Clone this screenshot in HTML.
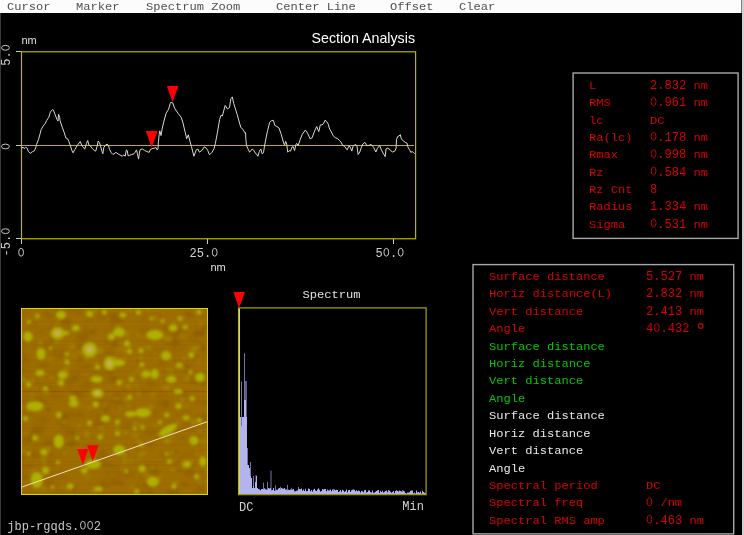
<!DOCTYPE html>
<html><head><meta charset="utf-8"><style>
html,body{margin:0;padding:0;background:#000;}
body{width:744px;height:535px;overflow:hidden;position:relative;font-family:"Liberation Mono",monospace;}
svg{position:absolute;left:0;top:0;will-change:transform;}
</style></head><body>
<svg width="744" height="535" viewBox="0 0 744 535">
<defs>
<filter id="bl" x="-20%" y="-20%" width="140%" height="140%"><feGaussianBlur stdDeviation="1.7"/></filter>
<filter id="bl2" x="-50%" y="-50%" width="200%" height="200%"><feGaussianBlur stdDeviation="1.2"/></filter>
<filter id="bl3" x="-50%" y="-50%" width="200%" height="200%"><feGaussianBlur stdDeviation="1.8"/></filter>
<filter id="bl4" x="-5%" y="-200%" width="110%" height="500%"><feGaussianBlur stdDeviation="0.5"/></filter>
<clipPath id="afm"><rect x="21" y="308" width="187" height="187"/></clipPath>
</defs>
<rect x="0" y="0" width="744" height="535" fill="#000"/>
<rect x="0" y="0" width="741" height="13" fill="#fcfcfc"/>
<rect x="741" y="0" width="1" height="13" fill="#808080"/>
<rect x="742" y="0" width="2" height="535" fill="#d0d0d0"/>
<rect x="0" y="13" width="1" height="522" fill="#383838"/>

<!-- chart -->
<rect x="21.5" y="51.8" width="394.1" height="186.95" fill="none" stroke="#bcb400" stroke-width="1.2"/>
<line x1="22" y1="145.5" x2="414" y2="145.5" stroke="#bcb400" stroke-width="1"/>
<line x1="16" y1="51.5" x2="21" y2="51.5" stroke="#c8c8c8" stroke-width="1"/>
<line x1="16" y1="145.5" x2="21" y2="145.5" stroke="#c8c8c8" stroke-width="1"/>
<line x1="16" y1="238.5" x2="21" y2="238.5" stroke="#c8c8c8" stroke-width="1"/>
<line x1="21.5" y1="239" x2="21.5" y2="244" stroke="#c8c8c8" stroke-width="1"/>
<line x1="207.5" y1="239" x2="207.5" y2="244" stroke="#c8c8c8" stroke-width="1"/>
<line x1="393.5" y1="239" x2="393.5" y2="244" stroke="#c8c8c8" stroke-width="1"/>
<polyline points="21.5,148.2 23.1,147.2 24.1,148.7 25.7,147.2 27.2,148.2 28.2,151.3 30.3,153.3 32.3,151.8 34.4,150.8 35.9,147.2 36.5,144.6 38.5,139.4 40.1,133.8 41.1,129.7 43.1,126.1 45.2,123.5 46.7,120.4 48.8,117.3 50.3,112.2 52.4,109.6 53.4,110.1 55.0,114.3 57.0,119.4 58.0,121.0 58.6,114.3 59.6,117.3 60.1,120.9 62.2,127.1 64.3,132.8 65.8,137.9 67.3,138.4 68.9,141.5 70.4,145.6 72.0,150.8 73.0,152.8 75.1,149.2 77.1,145.6 80.2,141.5 82.2,146.1 83.3,147.2 84.8,149.2 86.4,143.6 87.7,140.5 88.9,145.1 90.5,146.1 92.5,148.7 94.6,150.8 95.7,151.1 97.0,146.9 98.2,141.0 99.5,142.7 100.8,146.9 102.0,151.6 102.9,153.7 103.7,147.8 105.0,145.7 107.1,144.0 108.4,145.3 109.6,149.5 111.3,152.8 113.0,154.5 115.9,152.4 118.4,154.1 120.9,155.4 122.2,156.2 123.9,154.9 125.2,156.2 126.4,149.9 127.3,150.7 128.1,155.8 129.4,155.4 131.9,154.5 134.0,153.7 135.3,152.0 136.5,149.9 137.4,153.7 138.6,159.1 139.5,152.0 140.3,149.5 142.4,149.0 144.5,150.3 147.0,151.6 149.1,152.4 150.4,149.5 152.1,148.6 154.2,148.2 155.9,147.4 157.1,149.9 158.0,148.6 158.4,141.9 159.2,134.3 159.8,130.8 161.0,135.6 162.1,129.2 163.7,122.1 166.1,113.3 168.5,109.4 170.1,103.8 170.9,102.2 172.8,103.0 174.8,108.6 178.0,113.3 181.2,117.3 182.8,122.1 185.2,132.4 186.7,138.7 188.3,134.8 189.9,141.1 191.5,146.7 193.9,156.2 196.3,149.8 197.9,149.0 199.4,152.2 200.0,151.7 202.1,150.3 204.2,146.8 206.3,148.2 207.7,150.3 209.5,154.8 211.9,152.4 214.0,148.9 215.4,143.3 217.5,132.1 219.6,119.5 221.0,115.2 222.4,115.9 225.2,105.4 227.3,108.9 229.5,107.5 230.9,98.4 232.3,97.0 233.7,103.3 237.2,114.5 240.7,127.2 242.8,129.3 244.9,132.8 245.5,132.6 246.0,140.9 246.5,145.5 248.1,149.1 249.6,152.2 252.2,149.1 253.7,150.1 255.3,153.2 256.3,153.7 257.9,156.3 259.4,151.2 260.9,149.1 262.0,153.7 263.5,152.7 264.5,146.0 266.1,137.8 267.6,130.6 269.7,122.3 271.2,120.8 273.3,120.3 274.8,125.4 276.9,126.5 279.0,128.0 281.0,133.7 283.6,142.9 284.6,145.0 285.6,141.4 286.7,144.0 287.7,152.2 289.2,150.6 290.5,151.2 292.1,147.0 293.1,146.5 294.6,150.6 295.7,145.0 296.7,143.4 298.2,145.5 300.3,139.3 302.3,134.2 305.4,130.1 307.5,133.1 310.1,138.8 312.1,137.8 314.2,132.1 316.7,126.5 318.8,131.6 320.3,124.9 321.9,124.9 323.4,123.9 325.0,120.3 326.5,121.3 328.1,123.9 329.6,129.0 331.2,131.6 333.2,135.7 335.3,137.8 337.3,138.3 339.2,140.2 340.9,141.9 342.6,145.3 344.7,146.5 347.2,149.9 348.9,146.1 350.2,146.9 351.8,151.1 353.1,146.1 355.6,144.4 356.9,145.7 358.1,154.5 359.8,152.0 361.5,146.9 362.8,144.0 364.9,142.3 367.0,145.7 369.1,145.3 371.2,144.4 373.7,147.4 375.8,152.0 377.5,148.2 379.7,145.7 381.4,149.9 383.1,153.2 385.2,156.6 386.0,149.0 387.3,148.2 389.4,149.0 390.6,150.7 392.7,152.0 394.8,151.1 396.1,148.2 396.5,139.4 397.8,136.4 399.0,136.0 400.3,134.7 401.1,138.1 402.4,140.2 404.1,141.5 405.8,142.7 407.0,143.1 407.9,146.9 409.6,149.9 410.8,152.4 412.1,151.6 413.4,152.4 414.6,153.7" fill="none" stroke="#d8d8d8" stroke-width="1" stroke-linejoin="round"/>
<polygon points="145.8,130.9 157.6,130.9 151.7,147.4" fill="#ff0000"/>
<polygon points="166.9,86 178.5,86 172.5,102.2" fill="#ff0000"/>

<!-- stats boxes -->
<rect x="573.1" y="73.0" width="165" height="165.4" fill="none" stroke="#a8a8a8" stroke-width="1.4"/>
<rect x="473.0" y="264.6" width="260.7" height="269.3" fill="none" stroke="#a8a8a8" stroke-width="1.4"/>

<!-- AFM image -->
<g clip-path="url(#afm)">
<rect x="21" y="308" width="187" height="187" fill="#9e6e00"/>
<g fill="#8a5800" filter="url(#bl3)"><ellipse cx="81.6" cy="336.2" rx="5.3" ry="1.7" opacity="0.31"/><ellipse cx="89.4" cy="318.8" rx="4.5" ry="1.6" opacity="0.28"/><ellipse cx="34.1" cy="325.0" rx="4.1" ry="3.6" opacity="0.19"/><ellipse cx="62.7" cy="425.3" rx="6.7" ry="2.9" opacity="0.27"/><ellipse cx="203.6" cy="316.7" rx="6.3" ry="2.2" opacity="0.19"/><ellipse cx="43.0" cy="365.7" rx="6.1" ry="2.0" opacity="0.32"/><ellipse cx="140.5" cy="377.6" rx="4.7" ry="1.7" opacity="0.17"/><ellipse cx="59.5" cy="435.2" rx="4.1" ry="2.3" opacity="0.33"/><ellipse cx="105.7" cy="364.1" rx="6.0" ry="3.2" opacity="0.22"/><ellipse cx="128.4" cy="406.2" rx="6.4" ry="3.3" opacity="0.24"/><ellipse cx="204.3" cy="330.1" rx="4.1" ry="3.4" opacity="0.20"/><ellipse cx="112.4" cy="315.3" rx="5.3" ry="3.4" opacity="0.32"/><ellipse cx="184.7" cy="366.7" rx="5.5" ry="3.0" opacity="0.32"/><ellipse cx="106.3" cy="465.1" rx="6.7" ry="2.7" opacity="0.35"/><ellipse cx="32.3" cy="439.2" rx="5.2" ry="4.0" opacity="0.40"/><ellipse cx="74.2" cy="380.1" rx="5.3" ry="1.6" opacity="0.29"/><ellipse cx="52.4" cy="329.9" rx="2.3" ry="3.4" opacity="0.19"/><ellipse cx="67.3" cy="381.1" rx="6.4" ry="1.7" opacity="0.28"/><ellipse cx="123.7" cy="473.2" rx="6.1" ry="3.7" opacity="0.23"/><ellipse cx="98.7" cy="375.1" rx="6.4" ry="3.9" opacity="0.20"/><ellipse cx="54.0" cy="351.4" rx="3.2" ry="2.7" opacity="0.33"/><ellipse cx="70.1" cy="308.8" rx="4.1" ry="2.4" opacity="0.32"/><ellipse cx="199.2" cy="437.1" rx="4.6" ry="3.0" opacity="0.35"/><ellipse cx="31.1" cy="476.2" rx="5.9" ry="3.7" opacity="0.39"/><ellipse cx="94.4" cy="382.6" rx="2.5" ry="3.1" opacity="0.17"/><ellipse cx="33.6" cy="347.0" rx="2.8" ry="2.4" opacity="0.17"/><ellipse cx="21.0" cy="336.3" rx="2.5" ry="2.4" opacity="0.16"/><ellipse cx="184.5" cy="422.8" rx="2.7" ry="2.1" opacity="0.25"/><ellipse cx="89.1" cy="331.0" rx="6.2" ry="4.0" opacity="0.29"/><ellipse cx="111.5" cy="324.1" rx="2.5" ry="2.4" opacity="0.23"/><ellipse cx="176.0" cy="338.2" rx="2.1" ry="3.9" opacity="0.31"/><ellipse cx="48.4" cy="409.6" rx="2.1" ry="2.8" opacity="0.44"/><ellipse cx="182.4" cy="438.2" rx="3.3" ry="2.4" opacity="0.20"/><ellipse cx="165.4" cy="407.6" rx="5.9" ry="2.3" opacity="0.22"/><ellipse cx="172.8" cy="492.2" rx="6.3" ry="3.5" opacity="0.40"/><ellipse cx="159.4" cy="350.4" rx="4.6" ry="2.4" opacity="0.16"/><ellipse cx="26.2" cy="360.3" rx="3.3" ry="3.2" opacity="0.44"/><ellipse cx="104.6" cy="483.2" rx="6.9" ry="3.9" opacity="0.26"/><ellipse cx="62.2" cy="350.4" rx="3.0" ry="2.0" opacity="0.34"/><ellipse cx="189.4" cy="465.2" rx="4.4" ry="3.1" opacity="0.39"/><ellipse cx="36.9" cy="431.5" rx="6.5" ry="3.5" opacity="0.38"/><ellipse cx="110.4" cy="341.4" rx="5.9" ry="2.3" opacity="0.39"/><ellipse cx="202.7" cy="382.0" rx="4.0" ry="3.9" opacity="0.37"/><ellipse cx="52.8" cy="331.8" rx="2.8" ry="3.8" opacity="0.39"/><ellipse cx="48.3" cy="462.6" rx="6.9" ry="3.1" opacity="0.26"/><ellipse cx="123.6" cy="332.5" rx="2.1" ry="3.9" opacity="0.34"/><ellipse cx="119.5" cy="482.6" rx="4.2" ry="3.7" opacity="0.40"/><ellipse cx="60.5" cy="355.1" rx="3.5" ry="2.1" opacity="0.33"/><ellipse cx="69.5" cy="386.4" rx="2.7" ry="3.8" opacity="0.26"/><ellipse cx="106.7" cy="417.1" rx="6.5" ry="2.6" opacity="0.43"/><ellipse cx="114.8" cy="407.5" rx="4.6" ry="1.5" opacity="0.28"/><ellipse cx="55.2" cy="308.7" rx="6.0" ry="1.9" opacity="0.29"/><ellipse cx="156.6" cy="412.1" rx="3.6" ry="2.8" opacity="0.32"/><ellipse cx="167.7" cy="327.8" rx="4.8" ry="2.1" opacity="0.23"/><ellipse cx="165.4" cy="402.9" rx="4.8" ry="3.4" opacity="0.42"/><ellipse cx="103.9" cy="422.5" rx="4.5" ry="2.8" opacity="0.36"/><ellipse cx="105.6" cy="407.7" rx="4.4" ry="3.9" opacity="0.36"/><ellipse cx="184.9" cy="484.2" rx="3.3" ry="2.9" opacity="0.43"/><ellipse cx="178.1" cy="333.6" rx="2.6" ry="2.6" opacity="0.17"/><ellipse cx="66.0" cy="321.7" rx="5.3" ry="3.5" opacity="0.42"/><ellipse cx="49.9" cy="441.9" rx="5.3" ry="1.9" opacity="0.41"/><ellipse cx="201.9" cy="349.1" rx="6.8" ry="2.5" opacity="0.30"/><ellipse cx="206.1" cy="463.7" rx="2.8" ry="2.6" opacity="0.30"/><ellipse cx="84.4" cy="344.6" rx="3.6" ry="3.3" opacity="0.16"/><ellipse cx="124.6" cy="390.4" rx="2.1" ry="2.3" opacity="0.34"/><ellipse cx="116.8" cy="320.0" rx="6.9" ry="3.5" opacity="0.44"/><ellipse cx="40.6" cy="357.7" rx="2.2" ry="3.4" opacity="0.23"/><ellipse cx="45.2" cy="387.0" rx="6.6" ry="3.5" opacity="0.23"/><ellipse cx="48.9" cy="479.9" rx="4.9" ry="3.3" opacity="0.18"/><ellipse cx="31.8" cy="436.7" rx="4.1" ry="1.7" opacity="0.43"/><ellipse cx="139.6" cy="457.9" rx="2.4" ry="3.6" opacity="0.17"/><ellipse cx="182.3" cy="392.9" rx="3.7" ry="2.9" opacity="0.43"/><ellipse cx="71.1" cy="332.2" rx="4.6" ry="2.1" opacity="0.18"/><ellipse cx="51.2" cy="317.4" rx="3.0" ry="2.3" opacity="0.24"/><ellipse cx="163.0" cy="362.2" rx="4.5" ry="1.9" opacity="0.25"/><ellipse cx="24.4" cy="354.8" rx="2.1" ry="3.3" opacity="0.32"/><ellipse cx="56.4" cy="396.8" rx="6.7" ry="1.8" opacity="0.40"/><ellipse cx="101.8" cy="400.6" rx="6.2" ry="2.5" opacity="0.30"/><ellipse cx="149.6" cy="491.7" rx="3.7" ry="3.6" opacity="0.36"/><ellipse cx="139.9" cy="383.7" rx="3.7" ry="1.6" opacity="0.19"/><ellipse cx="34.2" cy="446.5" rx="3.3" ry="1.9" opacity="0.18"/><ellipse cx="178.3" cy="470.8" rx="5.4" ry="2.2" opacity="0.22"/><ellipse cx="75.8" cy="393.9" rx="2.8" ry="2.6" opacity="0.23"/><ellipse cx="200.9" cy="489.9" rx="4.7" ry="2.1" opacity="0.44"/><ellipse cx="78.9" cy="374.7" rx="2.0" ry="2.5" opacity="0.29"/><ellipse cx="115.0" cy="345.6" rx="4.5" ry="1.5" opacity="0.23"/><ellipse cx="37.8" cy="382.7" rx="2.2" ry="1.6" opacity="0.24"/><ellipse cx="64.5" cy="417.5" rx="4.6" ry="3.4" opacity="0.35"/><ellipse cx="154.9" cy="472.4" rx="3.9" ry="2.3" opacity="0.45"/><ellipse cx="48.9" cy="443.4" rx="5.2" ry="1.6" opacity="0.40"/><ellipse cx="187.8" cy="425.3" rx="5.7" ry="3.5" opacity="0.19"/><ellipse cx="118.9" cy="402.3" rx="6.2" ry="3.5" opacity="0.40"/><ellipse cx="130.2" cy="475.0" rx="5.4" ry="3.2" opacity="0.22"/><ellipse cx="26.8" cy="332.9" rx="3.8" ry="1.8" opacity="0.40"/><ellipse cx="125.4" cy="425.4" rx="5.1" ry="3.2" opacity="0.30"/><ellipse cx="21.6" cy="457.2" rx="5.7" ry="2.8" opacity="0.31"/><ellipse cx="144.3" cy="320.4" rx="5.7" ry="2.1" opacity="0.17"/><ellipse cx="70.7" cy="444.4" rx="3.0" ry="3.3" opacity="0.44"/><ellipse cx="113.4" cy="379.5" rx="4.4" ry="3.2" opacity="0.38"/><ellipse cx="136.4" cy="428.2" rx="2.4" ry="1.9" opacity="0.23"/><ellipse cx="160.0" cy="364.9" rx="4.8" ry="1.5" opacity="0.17"/><ellipse cx="71.3" cy="433.7" rx="5.5" ry="3.2" opacity="0.24"/><ellipse cx="117.6" cy="394.9" rx="4.3" ry="1.8" opacity="0.42"/><ellipse cx="58.3" cy="490.9" rx="6.7" ry="1.5" opacity="0.29"/><ellipse cx="174.3" cy="489.0" rx="4.2" ry="2.2" opacity="0.21"/><ellipse cx="197.8" cy="347.4" rx="4.9" ry="1.9" opacity="0.31"/><ellipse cx="199.2" cy="332.8" rx="6.1" ry="2.8" opacity="0.42"/><ellipse cx="152.5" cy="351.3" rx="6.5" ry="2.7" opacity="0.16"/><ellipse cx="21.7" cy="399.9" rx="4.3" ry="2.3" opacity="0.19"/><ellipse cx="85.3" cy="367.1" rx="6.2" ry="1.5" opacity="0.38"/><ellipse cx="177.9" cy="330.4" rx="6.6" ry="3.3" opacity="0.42"/><ellipse cx="75.2" cy="377.6" rx="4.0" ry="4.0" opacity="0.33"/><ellipse cx="88.5" cy="388.0" rx="3.4" ry="1.6" opacity="0.18"/><ellipse cx="177.1" cy="361.4" rx="6.7" ry="2.1" opacity="0.23"/><ellipse cx="116.6" cy="343.5" rx="3.9" ry="3.9" opacity="0.42"/><ellipse cx="172.8" cy="426.0" rx="6.6" ry="3.9" opacity="0.31"/><ellipse cx="155.6" cy="317.3" rx="5.7" ry="2.6" opacity="0.38"/><ellipse cx="141.5" cy="361.5" rx="2.2" ry="3.8" opacity="0.19"/><ellipse cx="109.3" cy="372.3" rx="3.5" ry="3.3" opacity="0.44"/><ellipse cx="69.7" cy="430.7" rx="3.5" ry="2.9" opacity="0.27"/><ellipse cx="52.3" cy="338.2" rx="3.0" ry="3.8" opacity="0.30"/><ellipse cx="62.1" cy="477.5" rx="7.0" ry="2.6" opacity="0.19"/><ellipse cx="57.0" cy="325.0" rx="3.7" ry="1.7" opacity="0.22"/><ellipse cx="69.3" cy="414.5" rx="6.4" ry="3.4" opacity="0.27"/><ellipse cx="98.4" cy="406.0" rx="3.9" ry="2.3" opacity="0.17"/><ellipse cx="72.9" cy="489.0" rx="2.6" ry="2.8" opacity="0.34"/><ellipse cx="182.4" cy="348.4" rx="3.4" ry="2.1" opacity="0.27"/><ellipse cx="104.4" cy="486.4" rx="6.2" ry="3.7" opacity="0.16"/><ellipse cx="27.0" cy="440.7" rx="6.5" ry="2.7" opacity="0.33"/><ellipse cx="21.0" cy="381.2" rx="6.6" ry="3.6" opacity="0.41"/><ellipse cx="202.8" cy="354.5" rx="2.5" ry="1.9" opacity="0.31"/><ellipse cx="148.5" cy="484.1" rx="5.6" ry="3.1" opacity="0.38"/><ellipse cx="106.5" cy="411.1" rx="2.2" ry="3.5" opacity="0.22"/><ellipse cx="193.0" cy="428.7" rx="3.5" ry="1.8" opacity="0.23"/><ellipse cx="140.0" cy="438.6" rx="2.6" ry="1.7" opacity="0.31"/><ellipse cx="130.0" cy="380.6" rx="3.1" ry="3.0" opacity="0.15"/><ellipse cx="77.4" cy="394.1" rx="6.8" ry="3.1" opacity="0.42"/><ellipse cx="109.9" cy="351.9" rx="3.2" ry="3.9" opacity="0.36"/><ellipse cx="78.5" cy="312.1" rx="4.5" ry="3.2" opacity="0.28"/><ellipse cx="69.1" cy="432.8" rx="6.6" ry="2.1" opacity="0.16"/><ellipse cx="84.2" cy="386.6" rx="5.4" ry="2.0" opacity="0.39"/><ellipse cx="159.2" cy="402.4" rx="3.0" ry="3.9" opacity="0.24"/><ellipse cx="174.3" cy="351.2" rx="3.1" ry="3.4" opacity="0.24"/><ellipse cx="199.0" cy="400.7" rx="2.9" ry="2.1" opacity="0.28"/><ellipse cx="145.4" cy="485.4" rx="2.7" ry="2.5" opacity="0.21"/><ellipse cx="203.2" cy="334.5" rx="2.3" ry="1.7" opacity="0.27"/><ellipse cx="189.0" cy="473.2" rx="5.7" ry="4.0" opacity="0.43"/><ellipse cx="82.6" cy="342.7" rx="6.7" ry="3.4" opacity="0.16"/><ellipse cx="145.2" cy="378.8" rx="3.9" ry="2.3" opacity="0.20"/><ellipse cx="21.5" cy="360.3" rx="3.8" ry="3.9" opacity="0.19"/><ellipse cx="201.3" cy="346.8" rx="3.8" ry="3.6" opacity="0.40"/><ellipse cx="101.9" cy="317.2" rx="4.4" ry="2.4" opacity="0.43"/><ellipse cx="57.1" cy="376.1" rx="6.5" ry="1.6" opacity="0.27"/><ellipse cx="172.8" cy="451.4" rx="2.2" ry="1.6" opacity="0.17"/><ellipse cx="193.1" cy="356.1" rx="5.7" ry="3.7" opacity="0.25"/><ellipse cx="71.9" cy="487.1" rx="5.1" ry="2.2" opacity="0.36"/><ellipse cx="80.2" cy="359.5" rx="2.0" ry="3.4" opacity="0.42"/><ellipse cx="139.6" cy="484.4" rx="2.1" ry="2.1" opacity="0.29"/><ellipse cx="199.9" cy="486.4" rx="3.9" ry="2.1" opacity="0.28"/><ellipse cx="113.3" cy="481.6" rx="2.9" ry="3.5" opacity="0.37"/><ellipse cx="174.9" cy="452.5" rx="5.0" ry="2.3" opacity="0.25"/><ellipse cx="88.7" cy="454.3" rx="2.4" ry="2.0" opacity="0.38"/><ellipse cx="67.2" cy="320.1" rx="2.2" ry="2.9" opacity="0.25"/><ellipse cx="204.3" cy="473.2" rx="6.9" ry="2.2" opacity="0.18"/><ellipse cx="39.0" cy="401.2" rx="5.5" ry="2.6" opacity="0.22"/><ellipse cx="98.9" cy="424.0" rx="5.4" ry="3.4" opacity="0.40"/><ellipse cx="145.2" cy="330.7" rx="6.2" ry="2.2" opacity="0.32"/><ellipse cx="90.7" cy="446.0" rx="3.0" ry="2.1" opacity="0.22"/><ellipse cx="49.7" cy="473.3" rx="4.9" ry="2.3" opacity="0.27"/><ellipse cx="206.6" cy="402.9" rx="3.2" ry="3.5" opacity="0.35"/><ellipse cx="206.3" cy="327.1" rx="4.4" ry="3.5" opacity="0.40"/><ellipse cx="192.0" cy="315.5" rx="3.5" ry="1.8" opacity="0.21"/><ellipse cx="202.9" cy="417.1" rx="6.7" ry="2.4" opacity="0.41"/><ellipse cx="105.0" cy="356.6" rx="5.9" ry="3.9" opacity="0.18"/><ellipse cx="132.5" cy="423.9" rx="3.1" ry="2.4" opacity="0.19"/><ellipse cx="59.1" cy="355.7" rx="5.0" ry="3.1" opacity="0.21"/><ellipse cx="23.1" cy="369.2" rx="5.4" ry="2.0" opacity="0.24"/><ellipse cx="59.0" cy="456.7" rx="4.7" ry="1.7" opacity="0.18"/><ellipse cx="94.9" cy="410.9" rx="5.2" ry="1.7" opacity="0.20"/><ellipse cx="151.0" cy="384.6" rx="3.4" ry="2.3" opacity="0.44"/><ellipse cx="79.4" cy="413.9" rx="3.8" ry="2.5" opacity="0.41"/><ellipse cx="207.4" cy="376.0" rx="3.0" ry="3.3" opacity="0.21"/><ellipse cx="22.1" cy="476.6" rx="4.1" ry="3.6" opacity="0.27"/><ellipse cx="186.1" cy="394.2" rx="2.8" ry="1.5" opacity="0.32"/><ellipse cx="140.8" cy="478.1" rx="2.4" ry="3.1" opacity="0.26"/><ellipse cx="115.3" cy="335.3" rx="3.4" ry="2.8" opacity="0.43"/><ellipse cx="41.3" cy="399.7" rx="6.0" ry="3.9" opacity="0.21"/><ellipse cx="44.7" cy="484.4" rx="6.9" ry="2.7" opacity="0.17"/><ellipse cx="194.2" cy="380.5" rx="6.5" ry="3.1" opacity="0.40"/><ellipse cx="51.0" cy="454.9" rx="3.1" ry="2.5" opacity="0.40"/><ellipse cx="176.1" cy="342.2" rx="3.1" ry="2.5" opacity="0.31"/><ellipse cx="92.7" cy="331.0" rx="3.2" ry="3.3" opacity="0.42"/><ellipse cx="28.7" cy="413.2" rx="5.8" ry="1.6" opacity="0.40"/><ellipse cx="43.0" cy="420.1" rx="4.8" ry="3.1" opacity="0.24"/><ellipse cx="99.6" cy="417.0" rx="4.1" ry="3.1" opacity="0.28"/><ellipse cx="103.0" cy="312.4" rx="5.1" ry="2.7" opacity="0.22"/><ellipse cx="163.8" cy="453.9" rx="4.3" ry="1.9" opacity="0.29"/><ellipse cx="41.0" cy="332.0" rx="4.2" ry="1.7" opacity="0.28"/><ellipse cx="116.4" cy="315.6" rx="5.2" ry="1.7" opacity="0.37"/><ellipse cx="166.4" cy="403.6" rx="2.3" ry="2.8" opacity="0.26"/><ellipse cx="198.8" cy="333.5" rx="6.3" ry="4.0" opacity="0.37"/><ellipse cx="173.4" cy="344.2" rx="6.9" ry="2.7" opacity="0.44"/><ellipse cx="192.3" cy="338.9" rx="5.9" ry="3.8" opacity="0.17"/><ellipse cx="86.6" cy="449.4" rx="2.8" ry="3.7" opacity="0.23"/><ellipse cx="173.5" cy="334.8" rx="4.5" ry="3.8" opacity="0.21"/><ellipse cx="70.2" cy="402.6" rx="3.6" ry="1.6" opacity="0.20"/><ellipse cx="51.1" cy="483.1" rx="5.4" ry="3.7" opacity="0.20"/><ellipse cx="167.8" cy="329.5" rx="4.7" ry="3.1" opacity="0.26"/><ellipse cx="184.2" cy="411.8" rx="4.9" ry="3.7" opacity="0.18"/><ellipse cx="206.7" cy="425.8" rx="4.0" ry="3.5" opacity="0.23"/><ellipse cx="206.2" cy="416.0" rx="3.8" ry="3.4" opacity="0.28"/><ellipse cx="54.1" cy="447.1" rx="2.2" ry="3.5" opacity="0.23"/><ellipse cx="140.5" cy="492.0" rx="4.9" ry="3.2" opacity="0.24"/><ellipse cx="21.3" cy="314.3" rx="2.7" ry="3.0" opacity="0.28"/><ellipse cx="116.9" cy="475.5" rx="2.7" ry="2.1" opacity="0.35"/><ellipse cx="25.2" cy="308.5" rx="3.8" ry="1.8" opacity="0.26"/><ellipse cx="62.9" cy="417.1" rx="4.9" ry="2.0" opacity="0.34"/><ellipse cx="109.8" cy="333.2" rx="6.7" ry="2.1" opacity="0.19"/><ellipse cx="38.9" cy="427.3" rx="6.4" ry="3.5" opacity="0.27"/><ellipse cx="70.4" cy="310.1" rx="5.2" ry="2.9" opacity="0.26"/><ellipse cx="141.7" cy="391.0" rx="6.7" ry="3.3" opacity="0.22"/><ellipse cx="190.0" cy="316.2" rx="4.7" ry="2.5" opacity="0.22"/><ellipse cx="31.9" cy="453.6" rx="2.1" ry="2.9" opacity="0.43"/><ellipse cx="47.6" cy="345.3" rx="5.0" ry="2.8" opacity="0.34"/><ellipse cx="173.1" cy="340.7" rx="3.5" ry="2.3" opacity="0.16"/><ellipse cx="187.3" cy="454.4" rx="5.6" ry="1.5" opacity="0.40"/><ellipse cx="160.4" cy="395.0" rx="5.7" ry="2.6" opacity="0.22"/><ellipse cx="40.7" cy="351.4" rx="2.2" ry="2.3" opacity="0.37"/><ellipse cx="151.0" cy="466.1" rx="5.6" ry="2.2" opacity="0.32"/><ellipse cx="102.5" cy="455.4" rx="4.6" ry="2.2" opacity="0.34"/><ellipse cx="201.5" cy="348.6" rx="6.4" ry="1.5" opacity="0.23"/><ellipse cx="65.2" cy="447.1" rx="6.7" ry="3.4" opacity="0.25"/><ellipse cx="185.6" cy="369.4" rx="3.2" ry="3.8" opacity="0.34"/><ellipse cx="150.6" cy="432.4" rx="6.9" ry="2.7" opacity="0.40"/><ellipse cx="151.5" cy="468.4" rx="4.2" ry="3.3" opacity="0.32"/><ellipse cx="78.5" cy="347.6" rx="5.1" ry="1.7" opacity="0.42"/><ellipse cx="48.0" cy="313.0" rx="2.5" ry="3.8" opacity="0.25"/><ellipse cx="47.5" cy="313.4" rx="2.2" ry="3.2" opacity="0.34"/><ellipse cx="151.3" cy="445.8" rx="2.3" ry="3.0" opacity="0.26"/><ellipse cx="173.9" cy="461.3" rx="6.5" ry="1.7" opacity="0.41"/><ellipse cx="192.0" cy="484.6" rx="2.5" ry="2.0" opacity="0.18"/><ellipse cx="27.4" cy="466.5" rx="6.1" ry="3.1" opacity="0.40"/><ellipse cx="139.1" cy="361.7" rx="2.5" ry="1.7" opacity="0.38"/><ellipse cx="59.3" cy="367.7" rx="4.1" ry="1.6" opacity="0.23"/><ellipse cx="73.8" cy="441.8" rx="3.8" ry="2.3" opacity="0.44"/><ellipse cx="115.2" cy="467.2" rx="5.1" ry="1.6" opacity="0.27"/><ellipse cx="102.6" cy="452.6" rx="3.7" ry="3.3" opacity="0.31"/><ellipse cx="61.5" cy="469.2" rx="2.5" ry="3.5" opacity="0.20"/><ellipse cx="21.2" cy="345.8" rx="5.8" ry="3.9" opacity="0.15"/><ellipse cx="112.8" cy="399.9" rx="6.0" ry="2.0" opacity="0.30"/><ellipse cx="85.9" cy="463.6" rx="3.3" ry="3.9" opacity="0.24"/><ellipse cx="61.2" cy="438.8" rx="4.5" ry="1.8" opacity="0.34"/><ellipse cx="36.1" cy="455.3" rx="5.5" ry="3.5" opacity="0.34"/><ellipse cx="87.5" cy="383.0" rx="4.0" ry="3.7" opacity="0.18"/><ellipse cx="187.1" cy="312.7" rx="3.0" ry="2.2" opacity="0.42"/><ellipse cx="114.7" cy="378.9" rx="6.4" ry="2.1" opacity="0.29"/><ellipse cx="120.4" cy="449.1" rx="5.8" ry="3.1" opacity="0.25"/><ellipse cx="82.1" cy="337.0" rx="6.2" ry="3.2" opacity="0.37"/><ellipse cx="52.7" cy="390.1" rx="5.9" ry="2.9" opacity="0.19"/><ellipse cx="107.4" cy="473.5" rx="3.2" ry="2.0" opacity="0.24"/></g>
<g fill="#a89400" filter="url(#bl3)"><ellipse cx="152.5" cy="465.8" rx="1.9" ry="1.8" opacity="0.27"/><ellipse cx="82.1" cy="405.6" rx="1.9" ry="2.2" opacity="0.26"/><ellipse cx="203.4" cy="444.3" rx="1.8" ry="3.4" opacity="0.23"/><ellipse cx="92.9" cy="492.0" rx="3.5" ry="3.0" opacity="0.33"/><ellipse cx="57.7" cy="427.3" rx="1.8" ry="1.9" opacity="0.32"/><ellipse cx="27.3" cy="382.6" rx="3.5" ry="2.9" opacity="0.35"/><ellipse cx="139.3" cy="394.6" rx="1.9" ry="2.7" opacity="0.32"/><ellipse cx="159.6" cy="477.8" rx="2.6" ry="2.6" opacity="0.42"/><ellipse cx="99.8" cy="350.7" rx="3.3" ry="3.3" opacity="0.43"/><ellipse cx="151.9" cy="467.4" rx="3.2" ry="2.8" opacity="0.34"/><ellipse cx="79.5" cy="425.5" rx="1.7" ry="2.3" opacity="0.43"/><ellipse cx="154.4" cy="425.7" rx="2.1" ry="2.3" opacity="0.34"/><ellipse cx="137.2" cy="384.5" rx="3.2" ry="3.4" opacity="0.25"/><ellipse cx="143.4" cy="453.5" rx="2.5" ry="2.5" opacity="0.49"/><ellipse cx="28.1" cy="409.6" rx="1.9" ry="3.1" opacity="0.48"/><ellipse cx="118.1" cy="326.9" rx="2.9" ry="2.6" opacity="0.42"/><ellipse cx="116.8" cy="427.5" rx="3.6" ry="2.5" opacity="0.32"/><ellipse cx="198.3" cy="347.3" rx="3.2" ry="2.3" opacity="0.43"/><ellipse cx="43.9" cy="492.1" rx="2.4" ry="1.6" opacity="0.28"/><ellipse cx="95.7" cy="310.5" rx="2.5" ry="2.3" opacity="0.41"/><ellipse cx="86.8" cy="357.6" rx="2.1" ry="3.0" opacity="0.48"/><ellipse cx="119.6" cy="348.9" rx="3.5" ry="2.3" opacity="0.26"/><ellipse cx="45.2" cy="453.2" rx="3.5" ry="2.8" opacity="0.34"/><ellipse cx="126.1" cy="350.3" rx="3.9" ry="2.2" opacity="0.39"/><ellipse cx="174.1" cy="460.6" rx="2.7" ry="2.1" opacity="0.36"/><ellipse cx="44.4" cy="463.9" rx="2.4" ry="3.2" opacity="0.28"/><ellipse cx="91.3" cy="355.4" rx="2.6" ry="1.9" opacity="0.20"/><ellipse cx="156.0" cy="360.6" rx="2.1" ry="2.1" opacity="0.34"/><ellipse cx="101.1" cy="427.2" rx="3.1" ry="2.2" opacity="0.48"/><ellipse cx="180.8" cy="318.7" rx="3.6" ry="3.3" opacity="0.44"/><ellipse cx="47.3" cy="463.5" rx="3.1" ry="1.5" opacity="0.20"/><ellipse cx="199.0" cy="430.7" rx="2.1" ry="1.7" opacity="0.24"/><ellipse cx="64.7" cy="453.2" rx="2.4" ry="1.8" opacity="0.47"/><ellipse cx="169.0" cy="339.4" rx="3.7" ry="2.7" opacity="0.43"/><ellipse cx="146.0" cy="475.2" rx="3.5" ry="3.2" opacity="0.26"/><ellipse cx="150.6" cy="407.3" rx="3.4" ry="2.4" opacity="0.46"/><ellipse cx="124.8" cy="357.5" rx="2.1" ry="1.8" opacity="0.35"/><ellipse cx="31.9" cy="395.3" rx="1.9" ry="2.5" opacity="0.35"/><ellipse cx="121.9" cy="469.4" rx="1.5" ry="3.2" opacity="0.34"/><ellipse cx="126.2" cy="432.4" rx="3.6" ry="2.2" opacity="0.33"/><ellipse cx="200.6" cy="322.1" rx="3.1" ry="2.8" opacity="0.21"/><ellipse cx="135.0" cy="435.6" rx="3.8" ry="2.2" opacity="0.49"/><ellipse cx="116.5" cy="398.6" rx="3.7" ry="1.6" opacity="0.42"/><ellipse cx="137.9" cy="371.3" rx="3.7" ry="2.2" opacity="0.34"/><ellipse cx="119.3" cy="452.1" rx="2.0" ry="2.4" opacity="0.33"/><ellipse cx="124.6" cy="462.6" rx="2.2" ry="3.2" opacity="0.32"/><ellipse cx="115.2" cy="358.8" rx="2.8" ry="3.4" opacity="0.40"/><ellipse cx="169.1" cy="369.9" rx="2.3" ry="2.1" opacity="0.38"/><ellipse cx="139.7" cy="454.6" rx="1.6" ry="2.9" opacity="0.47"/><ellipse cx="123.0" cy="317.3" rx="2.3" ry="1.5" opacity="0.26"/><ellipse cx="193.3" cy="421.8" rx="3.1" ry="3.1" opacity="0.47"/><ellipse cx="135.4" cy="423.3" rx="3.1" ry="2.9" opacity="0.38"/><ellipse cx="148.3" cy="347.7" rx="3.2" ry="2.4" opacity="0.43"/><ellipse cx="40.0" cy="341.9" rx="1.6" ry="3.0" opacity="0.47"/><ellipse cx="143.6" cy="377.0" rx="3.6" ry="3.1" opacity="0.37"/><ellipse cx="69.2" cy="364.5" rx="2.6" ry="2.1" opacity="0.33"/><ellipse cx="141.0" cy="482.6" rx="1.6" ry="2.6" opacity="0.21"/><ellipse cx="43.2" cy="459.5" rx="2.9" ry="3.3" opacity="0.33"/><ellipse cx="23.6" cy="380.4" rx="3.0" ry="3.4" opacity="0.49"/><ellipse cx="109.9" cy="385.1" rx="1.8" ry="2.8" opacity="0.26"/><ellipse cx="49.4" cy="310.9" rx="1.5" ry="2.9" opacity="0.24"/><ellipse cx="201.7" cy="324.5" rx="3.7" ry="1.8" opacity="0.21"/><ellipse cx="155.5" cy="353.3" rx="3.3" ry="1.9" opacity="0.22"/><ellipse cx="165.7" cy="441.4" rx="3.6" ry="3.0" opacity="0.23"/><ellipse cx="138.6" cy="440.6" rx="2.7" ry="3.4" opacity="0.28"/><ellipse cx="201.3" cy="442.1" rx="1.5" ry="1.5" opacity="0.40"/><ellipse cx="173.8" cy="322.9" rx="2.3" ry="3.0" opacity="0.25"/><ellipse cx="182.0" cy="398.9" rx="1.6" ry="2.2" opacity="0.37"/><ellipse cx="103.0" cy="434.6" rx="1.9" ry="3.1" opacity="0.31"/><ellipse cx="141.6" cy="425.8" rx="2.5" ry="2.3" opacity="0.44"/><ellipse cx="197.7" cy="454.7" rx="2.9" ry="2.1" opacity="0.22"/><ellipse cx="203.1" cy="439.5" rx="3.6" ry="2.2" opacity="0.38"/><ellipse cx="203.8" cy="463.5" rx="3.0" ry="2.1" opacity="0.33"/><ellipse cx="187.1" cy="378.4" rx="3.2" ry="2.7" opacity="0.47"/><ellipse cx="172.0" cy="361.0" rx="1.5" ry="2.0" opacity="0.33"/><ellipse cx="130.7" cy="460.6" rx="3.7" ry="1.6" opacity="0.45"/><ellipse cx="172.8" cy="470.2" rx="2.9" ry="2.0" opacity="0.46"/><ellipse cx="171.9" cy="436.0" rx="3.8" ry="2.2" opacity="0.23"/><ellipse cx="124.5" cy="457.1" rx="2.0" ry="3.0" opacity="0.48"/><ellipse cx="64.8" cy="421.5" rx="3.2" ry="2.4" opacity="0.26"/><ellipse cx="68.6" cy="448.5" rx="3.5" ry="2.4" opacity="0.23"/><ellipse cx="171.8" cy="452.4" rx="2.1" ry="2.7" opacity="0.47"/><ellipse cx="186.5" cy="405.6" rx="2.7" ry="2.7" opacity="0.26"/><ellipse cx="57.0" cy="341.8" rx="3.3" ry="2.2" opacity="0.37"/><ellipse cx="96.3" cy="404.7" rx="1.9" ry="1.6" opacity="0.50"/><ellipse cx="90.9" cy="327.8" rx="3.1" ry="3.1" opacity="0.25"/><ellipse cx="132.7" cy="372.5" rx="2.8" ry="1.5" opacity="0.21"/><ellipse cx="206.2" cy="470.0" rx="2.7" ry="2.6" opacity="0.28"/><ellipse cx="166.7" cy="387.7" rx="3.9" ry="3.0" opacity="0.45"/><ellipse cx="201.2" cy="355.5" rx="1.6" ry="1.9" opacity="0.25"/><ellipse cx="36.6" cy="317.5" rx="2.9" ry="3.2" opacity="0.34"/><ellipse cx="198.1" cy="478.2" rx="1.7" ry="2.7" opacity="0.32"/><ellipse cx="43.4" cy="487.4" rx="2.1" ry="2.6" opacity="0.39"/><ellipse cx="199.9" cy="433.2" rx="2.5" ry="2.4" opacity="0.25"/><ellipse cx="201.6" cy="493.5" rx="2.1" ry="1.6" opacity="0.28"/><ellipse cx="86.8" cy="476.8" rx="3.8" ry="3.2" opacity="0.21"/><ellipse cx="168.1" cy="440.7" rx="3.1" ry="3.5" opacity="0.22"/><ellipse cx="48.1" cy="449.2" rx="3.8" ry="2.9" opacity="0.29"/><ellipse cx="131.6" cy="449.7" rx="1.8" ry="2.1" opacity="0.28"/><ellipse cx="44.2" cy="398.0" rx="1.9" ry="2.0" opacity="0.24"/><ellipse cx="147.7" cy="310.4" rx="3.3" ry="1.9" opacity="0.21"/><ellipse cx="194.5" cy="349.2" rx="3.8" ry="3.2" opacity="0.47"/><ellipse cx="47.1" cy="391.6" rx="1.7" ry="3.4" opacity="0.45"/><ellipse cx="138.5" cy="392.6" rx="2.3" ry="3.1" opacity="0.34"/><ellipse cx="138.5" cy="334.7" rx="2.1" ry="1.6" opacity="0.41"/><ellipse cx="124.5" cy="335.1" rx="3.7" ry="2.0" opacity="0.32"/><ellipse cx="50.1" cy="358.7" rx="3.6" ry="2.2" opacity="0.25"/><ellipse cx="112.8" cy="367.5" rx="3.8" ry="1.7" opacity="0.49"/><ellipse cx="31.6" cy="475.4" rx="3.2" ry="1.9" opacity="0.34"/><ellipse cx="74.5" cy="356.2" rx="2.0" ry="2.2" opacity="0.50"/><ellipse cx="207.6" cy="481.0" rx="1.7" ry="2.1" opacity="0.47"/><ellipse cx="31.7" cy="443.9" rx="2.2" ry="3.5" opacity="0.20"/><ellipse cx="171.9" cy="371.7" rx="1.9" ry="1.5" opacity="0.45"/><ellipse cx="119.5" cy="342.7" rx="2.6" ry="3.3" opacity="0.27"/><ellipse cx="127.8" cy="333.8" rx="2.0" ry="3.0" opacity="0.41"/><ellipse cx="57.8" cy="322.8" rx="1.7" ry="2.7" opacity="0.35"/><ellipse cx="72.2" cy="346.5" rx="3.0" ry="2.9" opacity="0.44"/><ellipse cx="130.0" cy="345.8" rx="1.7" ry="3.0" opacity="0.32"/><ellipse cx="155.9" cy="318.4" rx="3.5" ry="2.2" opacity="0.45"/><ellipse cx="182.7" cy="400.2" rx="1.5" ry="3.3" opacity="0.34"/><ellipse cx="184.1" cy="357.8" rx="2.0" ry="3.2" opacity="0.31"/><ellipse cx="51.6" cy="377.4" rx="3.0" ry="1.5" opacity="0.36"/><ellipse cx="104.4" cy="404.4" rx="1.8" ry="2.9" opacity="0.44"/><ellipse cx="182.8" cy="368.0" rx="3.3" ry="2.3" opacity="0.43"/><ellipse cx="32.4" cy="471.2" rx="3.9" ry="2.5" opacity="0.35"/><ellipse cx="120.2" cy="408.5" rx="1.6" ry="3.4" opacity="0.27"/><ellipse cx="55.1" cy="327.2" rx="2.1" ry="3.1" opacity="0.21"/><ellipse cx="39.0" cy="438.7" rx="2.0" ry="1.5" opacity="0.38"/><ellipse cx="128.8" cy="405.8" rx="3.3" ry="1.7" opacity="0.46"/><ellipse cx="155.1" cy="316.4" rx="1.8" ry="2.5" opacity="0.35"/><ellipse cx="73.3" cy="330.8" rx="2.5" ry="1.8" opacity="0.38"/><ellipse cx="182.0" cy="335.5" rx="2.9" ry="3.0" opacity="0.25"/><ellipse cx="175.5" cy="483.3" rx="2.5" ry="2.3" opacity="0.45"/><ellipse cx="119.3" cy="382.0" rx="3.9" ry="3.1" opacity="0.30"/><ellipse cx="66.0" cy="370.7" rx="2.6" ry="3.5" opacity="0.44"/><ellipse cx="191.7" cy="460.4" rx="3.6" ry="1.6" opacity="0.36"/><ellipse cx="200.1" cy="482.7" rx="2.1" ry="2.3" opacity="0.39"/><ellipse cx="89.1" cy="407.3" rx="1.7" ry="2.4" opacity="0.35"/><ellipse cx="24.9" cy="334.1" rx="3.9" ry="3.1" opacity="0.48"/><ellipse cx="139.4" cy="459.3" rx="3.7" ry="3.3" opacity="0.21"/><ellipse cx="141.0" cy="357.7" rx="3.2" ry="2.0" opacity="0.36"/><ellipse cx="193.9" cy="424.2" rx="2.1" ry="2.5" opacity="0.33"/><ellipse cx="198.8" cy="361.8" rx="2.3" ry="2.8" opacity="0.24"/><ellipse cx="132.1" cy="486.8" rx="2.8" ry="2.0" opacity="0.34"/><ellipse cx="120.8" cy="335.8" rx="1.8" ry="1.8" opacity="0.29"/><ellipse cx="97.0" cy="361.9" rx="2.1" ry="1.7" opacity="0.36"/><ellipse cx="178.0" cy="422.1" rx="2.9" ry="2.8" opacity="0.26"/><ellipse cx="153.8" cy="394.2" rx="2.9" ry="2.7" opacity="0.34"/><ellipse cx="79.1" cy="353.3" rx="2.1" ry="2.5" opacity="0.31"/><ellipse cx="130.5" cy="310.2" rx="2.4" ry="3.2" opacity="0.27"/><ellipse cx="125.1" cy="399.9" rx="2.2" ry="3.5" opacity="0.29"/><ellipse cx="165.4" cy="337.7" rx="1.7" ry="3.2" opacity="0.33"/><ellipse cx="32.6" cy="380.5" rx="2.6" ry="3.0" opacity="0.23"/><ellipse cx="63.1" cy="487.4" rx="3.3" ry="1.8" opacity="0.30"/><ellipse cx="86.9" cy="434.3" rx="3.0" ry="3.2" opacity="0.45"/><ellipse cx="117.8" cy="446.1" rx="3.4" ry="3.0" opacity="0.34"/><ellipse cx="167.8" cy="440.5" rx="3.8" ry="1.8" opacity="0.46"/><ellipse cx="21.8" cy="451.2" rx="3.0" ry="2.5" opacity="0.49"/><ellipse cx="128.0" cy="386.1" rx="3.5" ry="3.2" opacity="0.38"/><ellipse cx="92.0" cy="392.6" rx="2.6" ry="2.9" opacity="0.29"/></g>
<rect x="22" y="309" width="185" height="1" fill="#6a4000" opacity="0.06"/><rect x="22" y="313" width="185" height="1" fill="#6a4000" opacity="0.03"/><rect x="22" y="315" width="185" height="1" fill="#6a4000" opacity="0.04"/><rect x="22" y="321" width="185" height="1" fill="#6a4000" opacity="0.06"/><rect x="22" y="326" width="185" height="1" fill="#6a4000" opacity="0.07"/><rect x="22" y="328" width="185" height="1" fill="#6a4000" opacity="0.03"/><rect x="22" y="340" width="185" height="1" fill="#6a4000" opacity="0.04"/><rect x="22" y="341" width="185" height="1" fill="#6a4000" opacity="0.08"/><rect x="22" y="344" width="185" height="1" fill="#6a4000" opacity="0.06"/><rect x="22" y="355" width="185" height="1" fill="#6a4000" opacity="0.07"/><rect x="22" y="360" width="185" height="1" fill="#6a4000" opacity="0.07"/><rect x="22" y="362" width="185" height="1" fill="#6a4000" opacity="0.03"/><rect x="22" y="365" width="185" height="1" fill="#6a4000" opacity="0.07"/><rect x="22" y="367" width="185" height="1" fill="#6a4000" opacity="0.04"/><rect x="22" y="370" width="185" height="1" fill="#6a4000" opacity="0.06"/><rect x="22" y="371" width="185" height="1" fill="#6a4000" opacity="0.07"/><rect x="22" y="372" width="185" height="1" fill="#6a4000" opacity="0.07"/><rect x="22" y="376" width="185" height="1" fill="#6a4000" opacity="0.03"/><rect x="22" y="378" width="185" height="1" fill="#6a4000" opacity="0.04"/><rect x="22" y="381" width="185" height="1" fill="#6a4000" opacity="0.03"/><rect x="22" y="383" width="185" height="1" fill="#6a4000" opacity="0.08"/><rect x="22" y="396" width="185" height="1" fill="#6a4000" opacity="0.05"/><rect x="22" y="400" width="185" height="1" fill="#6a4000" opacity="0.05"/><rect x="22" y="402" width="185" height="1" fill="#6a4000" opacity="0.06"/><rect x="22" y="404" width="185" height="1" fill="#6a4000" opacity="0.06"/><rect x="22" y="410" width="185" height="1" fill="#6a4000" opacity="0.03"/><rect x="22" y="413" width="185" height="1" fill="#6a4000" opacity="0.05"/><rect x="22" y="415" width="185" height="1" fill="#6a4000" opacity="0.05"/><rect x="22" y="416" width="185" height="1" fill="#6a4000" opacity="0.05"/><rect x="22" y="418" width="185" height="1" fill="#6a4000" opacity="0.05"/><rect x="22" y="420" width="185" height="1" fill="#6a4000" opacity="0.06"/><rect x="22" y="422" width="185" height="1" fill="#6a4000" opacity="0.04"/><rect x="22" y="424" width="185" height="1" fill="#6a4000" opacity="0.04"/><rect x="22" y="427" width="185" height="1" fill="#6a4000" opacity="0.05"/><rect x="22" y="428" width="185" height="1" fill="#6a4000" opacity="0.07"/><rect x="22" y="431" width="185" height="1" fill="#6a4000" opacity="0.05"/><rect x="22" y="435" width="185" height="1" fill="#6a4000" opacity="0.04"/><rect x="22" y="437" width="185" height="1" fill="#6a4000" opacity="0.07"/><rect x="22" y="439" width="185" height="1" fill="#6a4000" opacity="0.04"/><rect x="22" y="443" width="185" height="1" fill="#6a4000" opacity="0.04"/><rect x="22" y="444" width="185" height="1" fill="#6a4000" opacity="0.07"/><rect x="22" y="445" width="185" height="1" fill="#6a4000" opacity="0.05"/><rect x="22" y="450" width="185" height="1" fill="#6a4000" opacity="0.03"/><rect x="22" y="457" width="185" height="1" fill="#6a4000" opacity="0.07"/><rect x="22" y="461" width="185" height="1" fill="#6a4000" opacity="0.05"/><rect x="22" y="462" width="185" height="1" fill="#6a4000" opacity="0.03"/><rect x="22" y="464" width="185" height="1" fill="#6a4000" opacity="0.07"/><rect x="22" y="465" width="185" height="1" fill="#6a4000" opacity="0.08"/><rect x="22" y="471" width="185" height="1" fill="#6a4000" opacity="0.07"/><rect x="22" y="472" width="185" height="1" fill="#6a4000" opacity="0.04"/><rect x="22" y="478" width="185" height="1" fill="#6a4000" opacity="0.04"/><rect x="22" y="483" width="185" height="1" fill="#6a4000" opacity="0.06"/><rect x="22" y="485" width="185" height="1" fill="#6a4000" opacity="0.07"/><rect x="22" y="489" width="185" height="1" fill="#6a4000" opacity="0.06"/><rect x="22" y="491" width="185" height="1" fill="#6a4000" opacity="0.04"/><rect x="22" y="492" width="185" height="1" fill="#6a4000" opacity="0.06"/>
<rect x="21" y="390.8" width="187" height="1.4" fill="#8a4a06" opacity="0.45" filter="url(#bl4)"/>
<g fill="#aeb000" filter="url(#bl)"><ellipse cx="61" cy="315" rx="5.00" ry="4.00"/><ellipse cx="89.7" cy="314" rx="3.50" ry="3.00"/><ellipse cx="104.4" cy="312.3" rx="2.50" ry="2.50"/><ellipse cx="28.8" cy="322" rx="2.00" ry="2.00"/><ellipse cx="37.5" cy="315.8" rx="2.00" ry="2.00"/><ellipse cx="57.5" cy="333.2" rx="7.00" ry="6.00"/><ellipse cx="64" cy="333" rx="6.00" ry="2.00"/><ellipse cx="75.8" cy="328" rx="4.00" ry="3.00"/><ellipse cx="28" cy="336.7" rx="4.50" ry="5.00"/><ellipse cx="89.7" cy="349.7" rx="7.50" ry="7.50"/><ellipse cx="41" cy="354" rx="4.50" ry="6.00"/><ellipse cx="109.6" cy="363.6" rx="6.00" ry="7.00"/><ellipse cx="111.4" cy="336.7" rx="3.50" ry="3.50"/><ellipse cx="62.7" cy="375" rx="5.00" ry="4.00"/><ellipse cx="40" cy="373" rx="4.50" ry="3.00"/><ellipse cx="96.6" cy="379.3" rx="6.00" ry="3.50"/><ellipse cx="97.5" cy="393.2" rx="6.00" ry="4.50"/><ellipse cx="61" cy="382.7" rx="3.00" ry="3.00"/><ellipse cx="28.8" cy="384.5" rx="2.50" ry="2.50"/><ellipse cx="45.3" cy="388.8" rx="2.50" ry="2.50"/><ellipse cx="67" cy="354" rx="2.00" ry="2.00"/><ellipse cx="67" cy="362" rx="2.50" ry="2.50"/><ellipse cx="97.5" cy="367" rx="2.50" ry="2.50"/><ellipse cx="50.5" cy="348" rx="1.80" ry="1.80"/><ellipse cx="73" cy="398" rx="4.00" ry="2.50"/><ellipse cx="122.7" cy="315" rx="3.50" ry="2.50"/><ellipse cx="138.3" cy="312.3" rx="2.50" ry="2.50"/><ellipse cx="151.4" cy="318.4" rx="2.00" ry="2.00"/><ellipse cx="119.2" cy="332.3" rx="6.00" ry="4.50"/><ellipse cx="154.8" cy="335" rx="8.50" ry="5.00"/><ellipse cx="173" cy="328" rx="4.50" ry="3.50"/><ellipse cx="185.2" cy="327.1" rx="3.00" ry="2.00"/><ellipse cx="199.1" cy="312.3" rx="2.50" ry="2.50"/><ellipse cx="127" cy="343.6" rx="3.00" ry="3.00"/><ellipse cx="129.6" cy="351.4" rx="2.50" ry="2.50"/><ellipse cx="141" cy="350.6" rx="2.50" ry="2.50"/><ellipse cx="166.1" cy="355.8" rx="5.00" ry="4.50"/><ellipse cx="191.3" cy="355" rx="3.00" ry="3.00"/><ellipse cx="118.3" cy="362.7" rx="7.00" ry="3.50"/><ellipse cx="141.8" cy="364.5" rx="2.50" ry="2.50"/><ellipse cx="179.2" cy="365.3" rx="3.50" ry="2.50"/><ellipse cx="146.1" cy="374" rx="4.50" ry="3.50"/><ellipse cx="154.8" cy="374" rx="4.00" ry="5.00"/><ellipse cx="171.3" cy="379.2" rx="5.00" ry="3.50"/><ellipse cx="200" cy="377.5" rx="5.00" ry="4.50"/><ellipse cx="131.4" cy="379.2" rx="2.50" ry="2.50"/><ellipse cx="119.2" cy="382.7" rx="2.50" ry="2.50"/><ellipse cx="178.3" cy="391.4" rx="4.50" ry="2.50"/><ellipse cx="129.6" cy="397.5" rx="2.50" ry="2.50"/><ellipse cx="192.2" cy="398.4" rx="2.50" ry="2.50"/><ellipse cx="162.6" cy="321" rx="2.00" ry="2.00"/><ellipse cx="180" cy="318.4" rx="2.00" ry="2.00"/><ellipse cx="190.5" cy="372.3" rx="2.00" ry="2.00"/><ellipse cx="35" cy="406.3" rx="8.50" ry="5.00"/><ellipse cx="73.7" cy="403.6" rx="5.00" ry="3.50"/><ellipse cx="95.7" cy="404.5" rx="3.00" ry="3.00"/><ellipse cx="58.8" cy="415" rx="3.00" ry="3.00"/><ellipse cx="105.4" cy="418.6" rx="4.50" ry="3.50"/><ellipse cx="89.5" cy="423" rx="2.50" ry="2.50"/><ellipse cx="25.4" cy="418.6" rx="2.50" ry="2.50"/><ellipse cx="58.8" cy="441.4" rx="5.00" ry="7.00"/><ellipse cx="35" cy="437.9" rx="3.00" ry="3.00"/><ellipse cx="43.8" cy="452" rx="3.50" ry="3.00"/><ellipse cx="100" cy="437" rx="2.50" ry="2.50"/><ellipse cx="77.2" cy="437.9" rx="2.00" ry="2.00"/><ellipse cx="93" cy="464.3" rx="8.00" ry="4.50"/><ellipse cx="45.6" cy="470.4" rx="3.50" ry="3.50"/><ellipse cx="84.3" cy="470.4" rx="3.50" ry="3.00"/><ellipse cx="36.8" cy="480" rx="6.00" ry="8.00"/><ellipse cx="70.2" cy="486.2" rx="3.50" ry="3.00"/><ellipse cx="98.3" cy="488.9" rx="4.50" ry="2.50"/><ellipse cx="52.6" cy="487.1" rx="1.80" ry="1.80"/><ellipse cx="28.9" cy="453.7" rx="2.00" ry="2.00"/><ellipse cx="57.9" cy="462.5" rx="2.00" ry="2.00"/><ellipse cx="143" cy="412.7" rx="8.00" ry="4.50"/><ellipse cx="130.5" cy="414" rx="5.50" ry="3.00"/><ellipse cx="117.5" cy="422" rx="2.50" ry="2.50"/><ellipse cx="168" cy="430" rx="10.50" ry="4.00" transform="rotate(-32 168 430)"/><ellipse cx="178.6" cy="405.9" rx="3.00" ry="3.00"/><ellipse cx="166.8" cy="415" rx="2.50" ry="2.50"/><ellipse cx="159.8" cy="422.6" rx="2.00" ry="2.00"/><ellipse cx="135" cy="428.5" rx="2.00" ry="2.00"/><ellipse cx="142.6" cy="427.4" rx="2.00" ry="2.00"/><ellipse cx="186" cy="417.7" rx="3.50" ry="2.50"/><ellipse cx="199.2" cy="420.3" rx="2.50" ry="2.50"/><ellipse cx="117.5" cy="433.5" rx="2.50" ry="2.50"/><ellipse cx="119.3" cy="450.2" rx="6.00" ry="5.00"/><ellipse cx="194" cy="440.5" rx="4.50" ry="4.50"/><ellipse cx="142.1" cy="468.7" rx="3.50" ry="3.50"/><ellipse cx="169.4" cy="461.6" rx="2.50" ry="2.50"/><ellipse cx="186.9" cy="464.3" rx="4.50" ry="3.50"/><ellipse cx="202.8" cy="461.6" rx="3.50" ry="5.00"/><ellipse cx="152.7" cy="481.8" rx="6.00" ry="5.00"/><ellipse cx="173.8" cy="486.2" rx="2.50" ry="2.50"/><ellipse cx="136.8" cy="491.5" rx="2.50" ry="2.50"/><ellipse cx="126.3" cy="471.3" rx="2.00" ry="2.00"/><ellipse cx="196.6" cy="476.6" rx="2.50" ry="2.50"/><ellipse cx="141.2" cy="445" rx="2.00" ry="2.00"/><ellipse cx="166.7" cy="453.7" rx="1.80" ry="1.80"/></g>
<g fill="#d0a880" filter="url(#bl2)" opacity="0.8"><ellipse cx="57.5" cy="333.2" rx="3.15" ry="2.7"/><ellipse cx="89.7" cy="349.7" rx="3.375" ry="3.375"/><ellipse cx="109.6" cy="363.6" rx="2.7" ry="3.15"/><ellipse cx="97.5" cy="393.2" rx="2.7" ry="2.025"/></g>
</g>
<rect x="21.5" y="308.5" width="186" height="186" fill="none" stroke="#e0d800" stroke-width="1"/>
<line x1="21.7" y1="487.1" x2="207" y2="421.8" stroke="#ece0c4" stroke-width="1"/>
<polygon points="77.1,449.1 88.3,449.1 82.9,464.7" fill="#ff0000"/>
<polygon points="87.2,445.2 98.6,445.2 92.7,461.2" fill="#ff0000"/>

<!-- spectrum -->
<line x1="241.5" y1="381.6" x2="241.5" y2="494" stroke="#7474ac" stroke-width="1"/><line x1="244.5" y1="353.2" x2="244.5" y2="494" stroke="#7474ac" stroke-width="1"/><line x1="246" y1="381" x2="246" y2="494" stroke="#7474ac" stroke-width="1.6"/><line x1="247.5" y1="448" x2="247.5" y2="494" stroke="#7474ac" stroke-width="1"/><line x1="250.5" y1="462" x2="250.5" y2="494" stroke="#7474ac" stroke-width="1"/><line x1="253.5" y1="476" x2="253.5" y2="494" stroke="#7474ac" stroke-width="1"/><line x1="256" y1="475" x2="256" y2="494" stroke="#7474ac" stroke-width="1"/><line x1="263.5" y1="482.7" x2="263.5" y2="494" stroke="#7474ac" stroke-width="1"/><line x1="267.5" y1="482" x2="267.5" y2="494" stroke="#7474ac" stroke-width="1"/><line x1="271" y1="470.7" x2="271" y2="494" stroke="#7474ac" stroke-width="1"/><line x1="275.5" y1="485.3" x2="275.5" y2="494" stroke="#7474ac" stroke-width="1"/><line x1="280.5" y1="486.8" x2="280.5" y2="494" stroke="#7474ac" stroke-width="1"/><line x1="287.5" y1="484.9" x2="287.5" y2="494" stroke="#7474ac" stroke-width="1"/><line x1="291.5" y1="487.8" x2="291.5" y2="494" stroke="#7474ac" stroke-width="1"/><line x1="298.5" y1="487" x2="298.5" y2="494" stroke="#7474ac" stroke-width="1"/><line x1="305.5" y1="488.5" x2="305.5" y2="494" stroke="#7474ac" stroke-width="1"/><line x1="318.5" y1="488" x2="318.5" y2="494" stroke="#7474ac" stroke-width="1"/><line x1="333.5" y1="489" x2="333.5" y2="494" stroke="#7474ac" stroke-width="1"/><line x1="352.5" y1="489.5" x2="352.5" y2="494" stroke="#7474ac" stroke-width="1"/><line x1="388.5" y1="490" x2="388.5" y2="494" stroke="#7474ac" stroke-width="1"/><line x1="402.5" y1="490" x2="402.5" y2="494" stroke="#7474ac" stroke-width="1"/>
<polygon points="239,494.0 239,417.0 240,417.0 240,417.0 241,417.0 241,426.0 242,426.0 242,417.0 243,417.0 243,417.0 244,417.0 244,400.0 245,400.0 245,400.0 246,400.0 246,417.0 247,417.0 247,465.0 248,465.0 248,465.0 249,465.0 249,468.0 250,468.0 250,476.0 251,476.0 251,478.0 252,478.0 252,488.0 253,488.0 253,486.0 254,486.0 254,488.0 255,488.0 255,482.0 256,482.0 256,476.0 257,476.0 257,488.0 258,488.0 258,488.9 259,488.9 259,489.2 260,489.2 260,490.3 261,490.3 261,489.0 262,489.0 262,489.1 263,489.1 263,489.4 264,489.4 264,488.2 265,488.2 265,489.2 266,489.2 266,489.5 267,489.5 267,490.1 268,490.1 268,488.0 269,488.0 269,488.6 270,488.6 270,488.0 271,488.0 271,490.2 272,490.2 272,489.9 273,489.9 273,487.9 274,487.9 274,490.8 275,490.8 275,490.7 276,490.7 276,489.8 277,489.8 277,489.7 278,489.7 278,488.4 279,488.4 279,488.0 280,488.0 280,489.5 281,489.5 281,488.1 282,488.1 282,488.6 283,488.6 283,488.7 284,488.7 284,488.1 285,488.1 285,489.4 286,489.4 286,489.4 287,489.4 287,490.6 288,490.6 288,489.7 289,489.7 289,490.0 290,490.0 290,489.6 291,489.6 291,490.1 292,490.1 292,489.6 293,489.6 293,489.0 294,489.0 294,491.2 295,491.2 295,491.2 296,491.2 296,490.8 297,490.8 297,490.4 298,490.4 298,489.2 299,489.2 299,489.0 300,489.0 300,489.2 301,489.2 301,488.6 302,488.6 302,490.7 303,490.7 303,489.6 304,489.6 304,491.0 305,491.0 305,489.6 306,489.6 306,491.3 307,491.3 307,491.0 308,491.0 308,488.5 309,488.5 309,489.1 310,489.1 310,491.3 311,491.3 311,490.0 312,490.0 312,491.5 313,491.5 313,489.8 314,489.8 314,488.8 315,488.8 315,490.5 316,490.5 316,491.0 317,491.0 317,489.5 318,489.5 318,489.0 319,489.0 319,489.7 320,489.7 320,491.6 321,491.6 321,491.0 322,491.0 322,489.1 323,489.1 323,489.5 324,489.5 324,489.1 325,489.1 325,489.0 326,489.0 326,491.3 327,491.3 327,489.4 328,489.4 328,490.6 329,490.6 329,490.3 330,490.3 330,489.5 331,489.5 331,491.2 332,491.2 332,489.4 333,489.4 333,490.9 334,490.9 334,489.4 335,489.4 335,490.3 336,490.3 336,489.7 337,489.7 337,489.9 338,489.9 338,492.0 339,492.0 339,491.5 340,491.5 340,490.1 341,490.1 341,491.8 342,491.8 342,489.8 343,489.8 343,490.4 344,490.4 344,491.8 345,491.8 345,491.2 346,491.2 346,489.6 347,489.6 347,492.2 348,492.2 348,489.9 349,489.9 349,490.1 350,490.1 350,491.7 351,491.7 351,490.3 352,490.3 352,490.3 353,490.3 353,489.6 354,489.6 354,489.7 355,489.7 355,491.2 356,491.2 356,490.2 357,490.2 357,491.3 358,491.3 358,490.6 359,490.6 359,490.9 360,490.9 360,492.4 361,492.4 361,491.0 362,491.0 362,491.3 363,491.3 363,492.2 364,492.2 364,490.2 365,490.2 365,490.1 366,490.1 366,492.4 367,492.4 367,492.1 368,492.1 368,490.4 369,490.4 369,490.3 370,490.3 370,492.0 371,492.0 371,492.6 372,492.6 372,490.4 373,490.4 373,492.7 374,492.7 374,492.5 375,492.5 375,491.7 376,491.7 376,491.1 377,491.1 377,490.2 378,490.2 378,490.0 379,490.0 379,492.8 380,492.8 380,490.7 381,490.7 381,492.1 382,492.1 382,490.8 383,490.8 383,492.5 384,492.5 384,491.8 385,491.8 385,490.9 386,490.9 386,490.6 387,490.6 387,492.2 388,492.2 388,490.3 389,490.3 389,490.8 390,490.8 390,491.8 391,491.8 391,492.7 392,492.7 392,492.0 393,492.0 393,491.0 394,491.0 394,493.0 395,493.0 395,490.9 396,490.9 396,490.3 397,490.3 397,491.1 398,491.1 398,491.6 399,491.6 399,490.5 400,490.5 400,490.9 401,490.9 401,491.5 402,491.5 402,492.1 403,492.1 403,490.8 404,490.8 404,491.5 405,491.5 405,493.1 406,493.1 406,493.4 407,493.4 407,492.5 408,492.5 408,492.6 409,492.6 409,492.3 410,492.3 410,490.9 411,490.9 411,490.6 412,490.6 412,490.6 413,490.6 413,493.2 414,493.2 414,492.6 415,492.6 415,493.4 416,493.4 416,490.6 417,490.6 417,492.4 418,492.4 418,491.9 419,491.9 419,492.7 420,492.7 420,491.5 421,491.5 421,493.5 422,493.5 422,490.7 423,490.7 423,492.1 424,492.1 424,492.7 425,492.7 425,493.2 426,493.2 426,494.0" fill="#b4b4ec"/>
<line x1="239.5" y1="308.5" x2="239.5" y2="494" stroke="#cfcfa8" stroke-width="1"/>
<rect x="238.5" y="307.9" width="187.6" height="186.8" fill="none" stroke="#bcb400" stroke-width="1.1"/>
<polygon points="233.4,292.1 245.1,292.1 239,308" fill="#ff0000"/>

<text transform="translate(7.00,9.9) scale(1.1,1)" fill="#505050" font-family="Liberation Mono" font-size="11" letter-spacing="-0.009"  xml:space="preserve">Cursor</text><text transform="translate(76.00,9.9) scale(1.1,1)" fill="#505050" font-family="Liberation Mono" font-size="11" letter-spacing="-0.009"  xml:space="preserve">Marker</text><text transform="translate(146.00,9.9) scale(1.1,1)" fill="#505050" font-family="Liberation Mono" font-size="11" letter-spacing="-0.009"  xml:space="preserve">Spectrum Zoom</text><text transform="translate(276.00,9.9) scale(1.1,1)" fill="#505050" font-family="Liberation Mono" font-size="11" letter-spacing="-0.009"  xml:space="preserve">Center Line</text><text transform="translate(390.00,9.9) scale(1.1,1)" fill="#505050" font-family="Liberation Mono" font-size="11" letter-spacing="-0.009"  xml:space="preserve">Offset</text><text transform="translate(459.00,9.9) scale(1.1,1)" fill="#505050" font-family="Liberation Mono" font-size="11" letter-spacing="-0.009"  xml:space="preserve">Clear</text><text x="311.5" y="43.1" fill="#ffffff" font-family="Liberation Sans" font-size="15" textLength="103.5" lengthAdjust="spacingAndGlyphs" xml:space="preserve">Section Analysis</text><text x="21.5" y="43.8" fill="#e0e0e0" font-family="Liberation Sans" font-size="11"  xml:space="preserve">nm</text><text x="210.5" y="271.2" fill="#e0e0e0" font-family="Liberation Sans" font-size="11"  xml:space="preserve">nm</text><text x="17.5" y="256.8" fill="#d0d0d0" font-family="Liberation Mono" font-size="12"  xml:space="preserve"> </text><text x="189.5" y="256.8" fill="#d0d0d0" font-family="Liberation Mono" font-size="12"  xml:space="preserve">25. </text><text x="375.5" y="256.8" fill="#d0d0d0" font-family="Liberation Mono" font-size="12"  xml:space="preserve">5 . </text><g transform="translate(10,55) rotate(-90)"><text x="-10.80" y="0" fill="#d0d0d0" font-family="Liberation Mono" font-size="12" xml:space="preserve">5. </text><ellipse cx="7.21" cy="-4.55" rx="2.4" ry="3.95" fill="none" stroke="#d0d0d0" stroke-width="0.95"/></g><g transform="translate(10,146.5) rotate(-90)"><text x="-3.60" y="0" fill="#d0d0d0" font-family="Liberation Mono" font-size="12" xml:space="preserve"> </text><ellipse cx="0.01" cy="-4.55" rx="2.4" ry="3.95" fill="none" stroke="#d0d0d0" stroke-width="0.95"/></g><g transform="translate(10,242) rotate(-90)"><text x="-14.40" y="0" fill="#d0d0d0" font-family="Liberation Mono" font-size="12" xml:space="preserve">-5. </text><ellipse cx="10.81" cy="-4.55" rx="2.4" ry="3.95" fill="none" stroke="#d0d0d0" stroke-width="0.95"/></g><text transform="translate(589.00,88.8) scale(1.1,1)" fill="#d80000" font-family="Liberation Mono" font-size="11" letter-spacing="-0.009"  xml:space="preserve">L</text><text transform="translate(650.00,88.8) scale(1.1,1.17)" fill="#d80000" font-family="Liberation Mono" font-size="11" letter-spacing="-0.009"  xml:space="preserve">2.832</text><text transform="translate(686.25,88.8) scale(1.1,1)" fill="#d80000" font-family="Liberation Mono" font-size="11" letter-spacing="-0.009"  xml:space="preserve"> nm</text><text transform="translate(589.00,106.15) scale(1.1,1)" fill="#d80000" font-family="Liberation Mono" font-size="11" letter-spacing="-0.009"  xml:space="preserve">RMS</text><text transform="translate(650.00,106.15) scale(1.1,1.17)" fill="#d80000" font-family="Liberation Mono" font-size="11" letter-spacing="-0.009"  xml:space="preserve"> .961</text><text transform="translate(686.25,106.15) scale(1.1,1)" fill="#d80000" font-family="Liberation Mono" font-size="11" letter-spacing="-0.009"  xml:space="preserve"> nm</text><text transform="translate(589.00,123.5) scale(1.1,1)" fill="#d80000" font-family="Liberation Mono" font-size="11" letter-spacing="-0.009"  xml:space="preserve">lc</text><text transform="translate(650.00,123.5) scale(1.1,1)" fill="#d80000" font-family="Liberation Mono" font-size="11" letter-spacing="-0.009"  xml:space="preserve">DC</text><text transform="translate(589.00,140.85) scale(1.1,1)" fill="#d80000" font-family="Liberation Mono" font-size="11" letter-spacing="-0.009"  xml:space="preserve">Ra(lc)</text><text transform="translate(650.00,140.85) scale(1.1,1.17)" fill="#d80000" font-family="Liberation Mono" font-size="11" letter-spacing="-0.009"  xml:space="preserve"> .178</text><text transform="translate(686.25,140.85) scale(1.1,1)" fill="#d80000" font-family="Liberation Mono" font-size="11" letter-spacing="-0.009"  xml:space="preserve"> nm</text><text transform="translate(589.00,158.2) scale(1.1,1)" fill="#d80000" font-family="Liberation Mono" font-size="11" letter-spacing="-0.009"  xml:space="preserve">Rmax</text><text transform="translate(650.00,158.2) scale(1.1,1.17)" fill="#d80000" font-family="Liberation Mono" font-size="11" letter-spacing="-0.009"  xml:space="preserve"> .998</text><text transform="translate(686.25,158.2) scale(1.1,1)" fill="#d80000" font-family="Liberation Mono" font-size="11" letter-spacing="-0.009"  xml:space="preserve"> nm</text><text transform="translate(589.00,175.55) scale(1.1,1)" fill="#d80000" font-family="Liberation Mono" font-size="11" letter-spacing="-0.009"  xml:space="preserve">Rz</text><text transform="translate(650.00,175.55) scale(1.1,1.17)" fill="#d80000" font-family="Liberation Mono" font-size="11" letter-spacing="-0.009"  xml:space="preserve"> .584</text><text transform="translate(686.25,175.55) scale(1.1,1)" fill="#d80000" font-family="Liberation Mono" font-size="11" letter-spacing="-0.009"  xml:space="preserve"> nm</text><text transform="translate(589.00,192.9) scale(1.1,1)" fill="#d80000" font-family="Liberation Mono" font-size="11" letter-spacing="-0.009"  xml:space="preserve">Rz Cnt</text><text transform="translate(650.00,192.9) scale(1.1,1.17)" fill="#d80000" font-family="Liberation Mono" font-size="11" letter-spacing="-0.009"  xml:space="preserve">8</text><text transform="translate(589.00,210.25) scale(1.1,1)" fill="#d80000" font-family="Liberation Mono" font-size="11" letter-spacing="-0.009"  xml:space="preserve">Radius</text><text transform="translate(650.00,210.25) scale(1.1,1.17)" fill="#d80000" font-family="Liberation Mono" font-size="11" letter-spacing="-0.009"  xml:space="preserve">1.334</text><text transform="translate(686.25,210.25) scale(1.1,1)" fill="#d80000" font-family="Liberation Mono" font-size="11" letter-spacing="-0.009"  xml:space="preserve"> nm</text><text transform="translate(589.00,227.60000000000002) scale(1.1,1)" fill="#d80000" font-family="Liberation Mono" font-size="11" letter-spacing="-0.009"  xml:space="preserve">Sigma</text><text transform="translate(650.00,227.60000000000002) scale(1.1,1.17)" fill="#d80000" font-family="Liberation Mono" font-size="11" letter-spacing="-0.009"  xml:space="preserve"> .531</text><text transform="translate(686.25,227.60000000000002) scale(1.1,1)" fill="#d80000" font-family="Liberation Mono" font-size="11" letter-spacing="-0.009"  xml:space="preserve"> nm</text><text transform="translate(489.00,279.9) scale(1.1,1)" fill="#d80000" font-family="Liberation Mono" font-size="11" letter-spacing="-0.009"  xml:space="preserve">Surface distance</text><text transform="translate(645.90,279.9) scale(1.1,1.17)" fill="#d80000" font-family="Liberation Mono" font-size="11" letter-spacing="-0.009"  xml:space="preserve">5.527</text><text transform="translate(682.15,279.9) scale(1.1,1)" fill="#d80000" font-family="Liberation Mono" font-size="11" letter-spacing="-0.009"  xml:space="preserve"> nm</text><text transform="translate(489.00,297.32) scale(1.1,1)" fill="#d80000" font-family="Liberation Mono" font-size="11" letter-spacing="-0.009"  xml:space="preserve">Horiz distance(L)</text><text transform="translate(645.90,297.32) scale(1.1,1.17)" fill="#d80000" font-family="Liberation Mono" font-size="11" letter-spacing="-0.009"  xml:space="preserve">2.832</text><text transform="translate(682.15,297.32) scale(1.1,1)" fill="#d80000" font-family="Liberation Mono" font-size="11" letter-spacing="-0.009"  xml:space="preserve"> nm</text><text transform="translate(489.00,314.74) scale(1.1,1)" fill="#d80000" font-family="Liberation Mono" font-size="11" letter-spacing="-0.009"  xml:space="preserve">Vert distance</text><text transform="translate(645.90,314.74) scale(1.1,1.17)" fill="#d80000" font-family="Liberation Mono" font-size="11" letter-spacing="-0.009"  xml:space="preserve">2.413</text><text transform="translate(682.15,314.74) scale(1.1,1)" fill="#d80000" font-family="Liberation Mono" font-size="11" letter-spacing="-0.009"  xml:space="preserve"> nm</text><text transform="translate(489.00,332.15999999999997) scale(1.1,1)" fill="#d80000" font-family="Liberation Mono" font-size="11" letter-spacing="-0.009"  xml:space="preserve">Angle</text><text transform="translate(645.90,332.15999999999997) scale(1.1,1.17)" fill="#d80000" font-family="Liberation Mono" font-size="11" letter-spacing="-0.009"  xml:space="preserve">4 .432</text><text transform="translate(489.00,349.58) scale(1.1,1)" fill="#00c800" font-family="Liberation Mono" font-size="11" letter-spacing="-0.009"  xml:space="preserve">Surface distance</text><text transform="translate(489.00,367.0) scale(1.1,1)" fill="#00c800" font-family="Liberation Mono" font-size="11" letter-spacing="-0.009"  xml:space="preserve">Horiz distance</text><text transform="translate(489.00,384.41999999999996) scale(1.1,1)" fill="#00c800" font-family="Liberation Mono" font-size="11" letter-spacing="-0.009"  xml:space="preserve">Vert distance</text><text transform="translate(489.00,401.84) scale(1.1,1)" fill="#00c800" font-family="Liberation Mono" font-size="11" letter-spacing="-0.009"  xml:space="preserve">Angle</text><text transform="translate(489.00,419.26) scale(1.1,1)" fill="#e8e8e8" font-family="Liberation Mono" font-size="11" letter-spacing="-0.009"  xml:space="preserve">Surface distance</text><text transform="translate(489.00,436.68) scale(1.1,1)" fill="#e8e8e8" font-family="Liberation Mono" font-size="11" letter-spacing="-0.009"  xml:space="preserve">Horiz distance</text><text transform="translate(489.00,454.1) scale(1.1,1)" fill="#e8e8e8" font-family="Liberation Mono" font-size="11" letter-spacing="-0.009"  xml:space="preserve">Vert distance</text><text transform="translate(489.00,471.52) scale(1.1,1)" fill="#e8e8e8" font-family="Liberation Mono" font-size="11" letter-spacing="-0.009"  xml:space="preserve">Angle</text><text transform="translate(489.00,488.94) scale(1.1,1)" fill="#d80000" font-family="Liberation Mono" font-size="11" letter-spacing="-0.009"  xml:space="preserve">Spectral period</text><text transform="translate(645.90,488.94) scale(1.1,1)" fill="#d80000" font-family="Liberation Mono" font-size="11" letter-spacing="-0.009"  xml:space="preserve">DC</text><text transform="translate(489.00,506.36) scale(1.1,1)" fill="#d80000" font-family="Liberation Mono" font-size="11" letter-spacing="-0.009"  xml:space="preserve">Spectral freq</text><text transform="translate(653.15,506.36) scale(1.1,1)" fill="#d80000" font-family="Liberation Mono" font-size="11" letter-spacing="-0.009"  xml:space="preserve"> /nm</text><text transform="translate(489.00,523.78) scale(1.1,1)" fill="#d80000" font-family="Liberation Mono" font-size="11" letter-spacing="-0.009"  xml:space="preserve">Spectral RMS amp</text><text transform="translate(645.90,523.78) scale(1.1,1.17)" fill="#d80000" font-family="Liberation Mono" font-size="11" letter-spacing="-0.009"  xml:space="preserve"> .463</text><text transform="translate(682.15,523.78) scale(1.1,1)" fill="#d80000" font-family="Liberation Mono" font-size="11" letter-spacing="-0.009"  xml:space="preserve"> nm</text><text transform="translate(302.50,297.7) scale(1.1,1)" fill="#e0e0e0" font-family="Liberation Mono" font-size="11" letter-spacing="-0.009"  xml:space="preserve">Spectrum</text><text x="239" y="510.5" fill="#d0d0d0" font-family="Liberation Mono" font-size="12"  xml:space="preserve">DC</text><text x="402.3" y="510.2" fill="#d0d0d0" font-family="Liberation Mono" font-size="12"  xml:space="preserve">Min</text><text x="7.3" y="529.8" fill="#c8c8c8" font-family="Liberation Mono" font-size="12"  xml:space="preserve">jbp-rgqds.  2</text>
<ellipse cx="21.11" cy="252.25" rx="2.4" ry="3.95" fill="none" stroke="#d0d0d0" stroke-width="0.95"/><ellipse cx="214.71" cy="252.25" rx="2.4" ry="3.95" fill="none" stroke="#d0d0d0" stroke-width="0.95"/><ellipse cx="386.31" cy="252.25" rx="2.4" ry="3.95" fill="none" stroke="#d0d0d0" stroke-width="0.95"/><ellipse cx="400.71" cy="252.25" rx="2.4" ry="3.95" fill="none" stroke="#d0d0d0" stroke-width="0.95"/><ellipse cx="653.62" cy="101.55" rx="2.45" ry="3.95" fill="none" stroke="#d80000" stroke-width="0.92"/><ellipse cx="653.62" cy="136.25" rx="2.45" ry="3.95" fill="none" stroke="#d80000" stroke-width="0.92"/><ellipse cx="653.62" cy="153.60" rx="2.45" ry="3.95" fill="none" stroke="#d80000" stroke-width="0.92"/><ellipse cx="653.62" cy="170.95" rx="2.45" ry="3.95" fill="none" stroke="#d80000" stroke-width="0.92"/><ellipse cx="653.62" cy="223.00" rx="2.45" ry="3.95" fill="none" stroke="#d80000" stroke-width="0.92"/><ellipse cx="656.77" cy="327.56" rx="2.45" ry="3.95" fill="none" stroke="#d80000" stroke-width="0.92"/><ellipse cx="649.52" cy="501.76" rx="2.45" ry="3.95" fill="none" stroke="#d80000" stroke-width="0.92"/><ellipse cx="649.52" cy="519.18" rx="2.45" ry="3.95" fill="none" stroke="#d80000" stroke-width="0.92"/><ellipse cx="82.91" cy="525.25" rx="2.4" ry="3.95" fill="none" stroke="#c8c8c8" stroke-width="0.95"/><ellipse cx="90.11" cy="525.25" rx="2.4" ry="3.95" fill="none" stroke="#c8c8c8" stroke-width="0.95"/>
<circle cx="700.7" cy="325.9" r="2.3" fill="none" stroke="#d00000" stroke-width="1.1"/>
</svg>
</body></html>
